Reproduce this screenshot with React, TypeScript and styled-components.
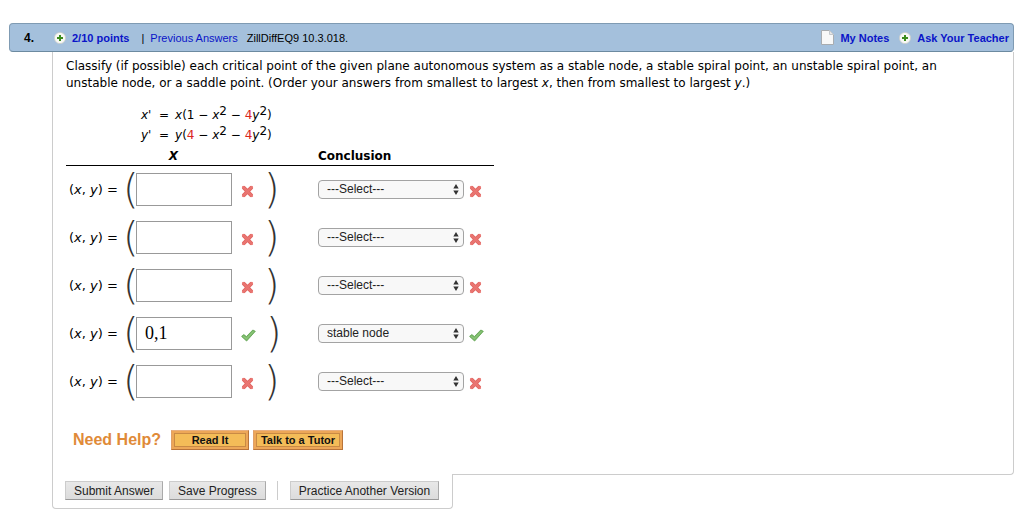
import React from "react";
import styled, { createGlobalStyle } from "styled-components";

const GlobalStyle = createGlobalStyle`
  * { box-sizing: border-box; }
  body {
    margin: 0;
    background: #fff;
    color: #000;
    font-family: Verdana, "DejaVu Sans", sans-serif;
    font-size: 12px;
    line-height: 17px;
  }
`;

const Page = styled.main`
  padding: 23px 10px 11px 9px;
`;

const Header = styled.header`
  display: flex;
  align-items: center;
  height: 29px;
  padding: 0 4px 0 14px;
  border: 1px solid #7f9bb3;
  border-bottom-color: #6c8aa0;
  border-radius: 4px;
  background: #a4c0dc;
  font-family: Arial, "Liberation Sans", sans-serif;
  font-size: 11px;
  line-height: 16px;
  white-space: nowrap;
`;

const Number = styled.h1`
  width: 30px;
  margin: 0;
  font-size: 12px;
`;

const HeaderLink = styled.a<{ $bold?: boolean }>`
  display: flex;
  align-items: center;
  gap: 6px;
  color: #0a14c8;
  font-weight: ${(p) => (p.$bold ? 700 : 400)};
  text-decoration: none;
`;

const Divider = styled.span`
  margin: 0 6px 0 12px;
`;

const Source = styled.span`
  margin-left: 9px;
`;

const HeaderActions = styled.nav`
  display: flex;
  gap: 10px;
  margin-left: auto;
`;

const Body = styled.section`
  margin-left: 43px;
  padding: 6px 36px 24px 13px;
  border: 1px solid #ccc;
  border-top: 0;
  border-radius: 0 0 4px 0;
`;

const Question = styled.p`
  margin: 0;
`;

const Equations = styled.div`
  display: grid;
  grid-template-columns: 12px max-content max-content;
  column-gap: 6px;
  margin: 13px 0 4px 75px;
  line-height: 20px;
  white-space: nowrap;

  sup {
    font-size: 12px;
    line-height: 1px;
    vertical-align: 4px;
  }
`;

const Red = styled.span`
  color: #d9261c;
`;

const AnswerTable = styled.table`
  width: 428px;
  border-collapse: collapse;
  table-layout: fixed;
`;

const HeadCell = styled.th<{ $wide?: boolean }>`
  width: ${(p) => (p.$wide ? "215px" : "auto")};
  height: 16px;
  padding: ${(p) => (p.$wide ? "0" : "0 0 0 37px")};
  border-bottom: 1px solid #000;
  line-height: 15px;
  text-align: ${(p) => (p.$wide ? "center" : "left")};
`;

const Cell = styled.td<{ $indent?: boolean }>`
  height: 48px;
  padding: 0 0 0 ${(p) => (p.$indent ? 37 : 3)}px;
`;

const Inline = styled.div`
  display: flex;
  align-items: center;
  white-space: pre;
`;

const PointLabel = styled.label`
  width: 54px;
  font-size: 13px;
`;

const Paren = styled.span`
  width: 13px;
  color: #333;
  font-family: "DejaVu Sans", sans-serif;
  font-size: 40px;
  font-weight: 200;
  line-height: 40px;
`;

const PointInput = styled.input`
  width: 96px;
  height: 33px;
  padding: 0 8px;
  border: 1px solid #999;
  background: #fff;
  font-family: "Liberation Serif", serif;
  font-size: 18px;
`;

const PointMark = styled.span`
  display: flex;
  margin: 4px 10px 0 9px;
`;

const SelectMark = styled.span`
  display: flex;
  margin: 4px 0 0 5px;
`;

const SelectBox = styled.span`
  display: grid;
  width: 146px;
  align-items: center;

  > * { grid-area: 1 / 1; }
  > svg { justify-self: end; margin-right: 5px; pointer-events: none; }
`;

const Select = styled.select`
  appearance: none;
  width: 100%;
  height: 19px;
  padding: 0 16px 1px 8px;
  border: 1px solid #a3a3a3;
  border-radius: 4px;
  background: #f8f8f8;
  color: #222;
  font-family: Arial, "Liberation Sans", sans-serif;
  font-size: 12px;
  line-height: 16px;
`;

const Help = styled.div`
  display: flex;
  align-items: center;
  gap: 4px;
  margin: 25px 0 0 7px;
  font-family: Arial, "Liberation Sans", sans-serif;
`;

const HelpTitle = styled.h2`
  width: 94px;
  margin: 0;
  color: #e08a38;
  font-size: 16px;
  line-height: 20px;
  white-space: nowrap;
`;

const HelpButton = styled.button<{ $width: number }>`
  width: ${(p) => p.$width}px;
  height: 20px;
  padding: 0;
  border: 1px solid;
  border-color: #e8b080 #b9743a #b9743a #e0a068;
  background: #f4bc58;
  box-shadow: inset 0 0 0 2px #eda758, inset 0 0 0 3px #c98a45;
  color: #111;
  font: bold 11px/16px Arial, "Liberation Sans", sans-serif;
  white-space: nowrap;
`;

const Footer = styled.footer`
  display: flex;
  align-items: flex-start;
  width: max-content;
  height: 35px;
  margin: -1px 0 0 43px;
  padding: 7px 13px 0 12px;
  border: solid #ccc;
  border-width: 0 1px 1px;
  border-radius: 0 0 4px 4px;
  background: #fff;
`;

const FooterButton = styled.button`
  height: 19px;
  margin-right: 6px;
  padding: 0 8px;
  border: 1px solid;
  border-color: #ccc #aaa #999 #ccc;
  background: linear-gradient(#e8e8e8, #dcdcdc);
  color: #222;
  font: 12px/16px Arial, "Liberation Sans", sans-serif;

  &:last-child { margin-right: 0; }
`;

const Separator = styled.span`
  width: 1px;
  height: 19px;
  margin: 0 12px 0 5px;
  background: #ccc;
`;

const PlusIcon = () => (
  <svg width="12" height="12" viewBox="0 0 12 12" aria-hidden="true">
    <circle cx="6" cy="6" r="5.6" fill="#f8f8f5" stroke="#c9cdca" strokeWidth="0.8" />
    <path d="M6 3v6M3 6h6" stroke="#3c8c1c" strokeWidth="2" />
  </svg>
);

const NoteIcon = () => (
  <svg width="13" height="15" viewBox="0 0 13 15" aria-hidden="true">
    <path d="M.5.5h8l4 4v10H.5z" fill="#f8f8f8" stroke="#a8acb0" />
    <path d="M8.5.5v4h4" fill="#e6e6e6" stroke="#c4c8cc" />
  </svg>
);

const CrossIcon = () => (
  <svg width="13" height="13" viewBox="0 0 13 13" role="img" aria-label="Incorrect">
    <path d="M2.2 2.2 10.8 10.8M10.8 2.2 2.2 10.8" stroke="#e0605c" strokeWidth="3.8" strokeLinecap="butt" />
    <path d="M2.2 2.2 10.8 10.8M10.8 2.2 2.2 10.8" stroke="#e97571" strokeWidth="2.6" strokeLinecap="round" />
  </svg>
);

const CheckIcon = () => (
  <svg width="15" height="13" viewBox="0 0 15 13" role="img" aria-label="Correct">
    <path d="M.6 7.4 2.8 5.6l2.6 2L11.8 1l2.5 1.3L5.6 12z" fill="#77b865" stroke="#64a656" strokeWidth="0.9" strokeLinejoin="round" />
    <path d="M2 7.2l3.5 2.4 7-7.2" fill="none" stroke="#8cc47a" strokeWidth="1.2" />
  </svg>
);

const Arrows = () => (
  <svg width="6" height="11" viewBox="0 0 6 11" aria-hidden="true">
    <path d="M3 0l2.7 4.4H.3zM3 11 .3 6.6h5.4z" fill="#333" />
  </svg>
);

const choices = [
  "---Select---",
  "stable node",
  "stable spiral point",
  "unstable spiral point",
  "unstable node",
  "saddle point",
];

const answers = [
  { point: "", choice: choices[0], correct: false },
  { point: "", choice: choices[0], correct: false },
  { point: "", choice: choices[0], correct: false },
  { point: "0,1", choice: choices[1], correct: true },
  { point: "", choice: choices[0], correct: false },
];

const Mark = ({ correct }: { correct: boolean }) => (correct ? <CheckIcon /> : <CrossIcon />);

const Terms = () => (
  <>
    {" − "}<i>x</i><sup>2</sup>{" − "}<Red>4</Red><i>y</i><sup>2</sup>)
  </>
);

export default function App() {
  return (
    <>
      <GlobalStyle />
      <Page>
        <Header>
          <Number>4.</Number>
          <HeaderLink href="#points" $bold><PlusIcon />2/10 points</HeaderLink>
          <Divider>|</Divider>
          <HeaderLink href="#previous">Previous Answers</HeaderLink>
          <Source>ZillDiffEQ9 10.3.018.</Source>
          <HeaderActions>
            <HeaderLink href="#notes" $bold><NoteIcon />My Notes</HeaderLink>
            <HeaderLink href="#ask" $bold><PlusIcon />Ask Your Teacher</HeaderLink>
          </HeaderActions>
        </Header>
        <Body>
          <Question>
            Classify (if possible) each critical point of the given plane autonomous system as a stable
            node, a stable spiral point, an unstable spiral point, an unstable node, or a saddle point.
            (Order your answers from smallest to largest <i>x</i>, then from smallest to largest <i>y</i>.)
          </Question>
          <Equations>
            <span><i>x</i>'</span><span>=</span><span><i>x</i>(1<Terms /></span>
            <span><i>y</i>'</span><span>=</span><span><i>y</i>(<Red>4</Red><Terms /></span>
          </Equations>
          <AnswerTable>
            <thead>
              <tr>
                <HeadCell $wide scope="col"><i>X</i></HeadCell>
                <HeadCell scope="col">Conclusion</HeadCell>
              </tr>
            </thead>
            <tbody>
              {answers.map((a, i) => (
                <tr key={i}>
                  <Cell>
                    <Inline>
                      <PointLabel htmlFor={`point-${i}`}>(<i>x</i>, <i>y</i>) =</PointLabel>
                      <Paren>(</Paren>
                      <PointInput id={`point-${i}`} defaultValue={a.point} />
                      <PointMark><Mark correct={a.correct} /></PointMark>
                      <Paren>)</Paren>
                    </Inline>
                  </Cell>
                  <Cell $indent>
                    <Inline>
                      <SelectBox>
                        <Select aria-label={`Conclusion ${i + 1}`} defaultValue={a.choice}>
                          {choices.map((c) => <option key={c}>{c}</option>)}
                        </Select>
                        <Arrows />
                      </SelectBox>
                      <SelectMark><Mark correct={a.correct} /></SelectMark>
                    </Inline>
                  </Cell>
                </tr>
              ))}
            </tbody>
          </AnswerTable>
          <Help>
            <HelpTitle>Need Help?</HelpTitle>
            <HelpButton type="button" $width={78}>Read It</HelpButton>
            <HelpButton type="button" $width={90}>Talk to a Tutor</HelpButton>
          </Help>
        </Body>
        <Footer>
          <FooterButton type="button">Submit Answer</FooterButton>
          <FooterButton type="button">Save Progress</FooterButton>
          <Separator />
          <FooterButton type="button">Practice Another Version</FooterButton>
        </Footer>
      </Page>
    </>
  );
}
